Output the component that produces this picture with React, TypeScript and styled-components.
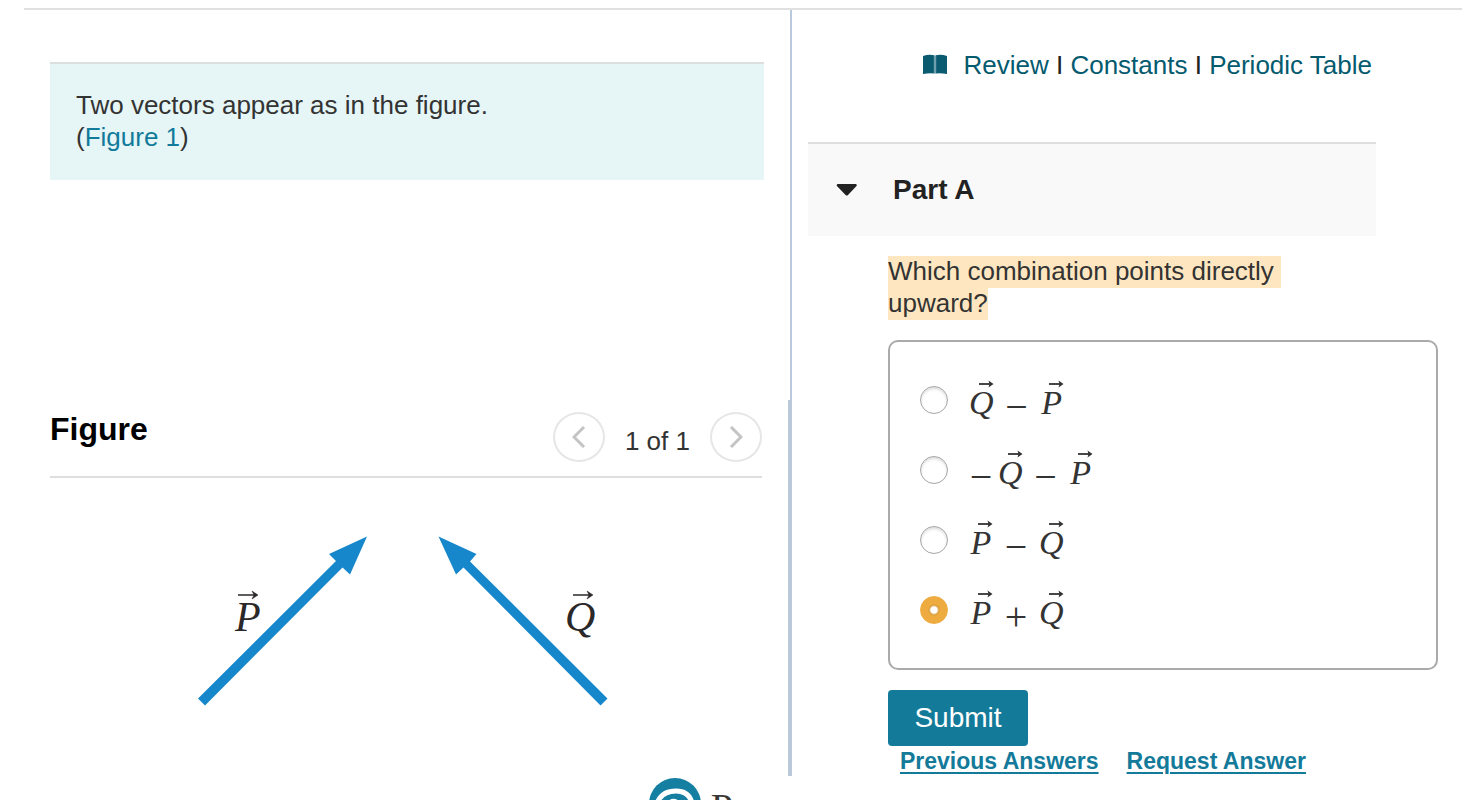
import React, { useState } from "react";
import styled, { createGlobalStyle } from "styled-components";

const GlobalStyle = createGlobalStyle`
  *, *::before, *::after { box-sizing: border-box; }
  body {
    margin: 0;
    background: #fff;
    color: #333;
    font-family: "Liberation Sans", Arial, Helvetica, sans-serif;
    font-size: 26px;
    line-height: 32px;
  }
`;

const Page = styled.div`
  height: 100vh;
  overflow: hidden;
  padding: 8px 0 0 24px;
`;

const Columns = styled.main`
  display: grid;
  grid-template-columns: 768fr 670fr;
  border-top: 2px solid #e0e0e0;
`;

const LeftPane = styled.div`
  display: flex;
  flex-direction: column;
  min-width: 0;
`;

const PromptSection = styled.section`
  min-height: 390px;
  padding: 52px 26px 0;
  border-right: 2px solid #b9c9de;
`;

const Prompt = styled.p`
  margin: 0;
  padding: 25px 26px 27px;
  border-top: 2px solid #dcdfdf;
  background: #e6f6f6;
`;

const TextLink = styled.a`
  color: #127a9b;
  text-decoration: none;
`;

const FigureSection = styled.section`
  flex: 1;
  min-height: 376px;
  padding: 0 26px;
  border-right: 4px solid #bac9da;
`;

const FigureHeader = styled.header`
  display: flex;
  justify-content: space-between;
  align-items: flex-start;
  height: 78px;
  padding-top: 12px;
  border-bottom: 2px solid #dedede;
`;

const FigureTitle = styled.h2`
  margin: 0;
  color: #000;
  font-size: 32px;
  line-height: 34px;
`;

const Pager = styled.nav`
  display: flex;
  align-items: center;
  gap: 20px;
`;

const PagerText = styled.span`
  padding-top: 8px;
`;

const PagerButton = styled.button`
  display: flex;
  align-items: center;
  justify-content: center;
  width: 52px;
  height: 50px;
  padding: 0;
  border: 2px solid #e6e6e6;
  border-radius: 50%;
  background: #fff;
  color: #c4c4c4;
`;

const FigureArt = styled.figure`
  display: flex;
  justify-content: center;
  margin: 0;
  padding-top: 52px;
`;

const RightPane = styled.div`
  min-width: 0;
  padding: 39px 0 0 16px;
`;

const Resources = styled.nav`
  display: flex;
  align-items: center;
  justify-content: flex-end;
  gap: 16px;
  margin-right: 90px;
  color: #222;

  a {
    color: #045a6e;
    text-decoration: none;
  }
`;

const PartHeader = styled.header`
  display: flex;
  align-items: center;
  gap: 35px;
  height: 94px;
  margin: 61px 86px 0 0;
  padding-left: 28px;
  border-top: 2px solid #dedede;
  background: #f9f9f9;
  color: #222;
`;

const Toggle = styled.button`
  display: flex;
  padding: 0;
  border: 0;
  background: none;
  color: inherit;
`;

const PartTitle = styled.h2`
  margin: 0;
  font-size: 28px;
  line-height: 32px;
`;

const PartBody = styled.form`
  padding: 19px 24px 0 80px;
`;

const Question = styled.p`
  margin: 0 0 21px;
`;

const Highlight = styled.mark`
  padding: 0 0 2px;
  background: #fee7c0;
  color: inherit;
`;

const Answers = styled.fieldset`
  margin: 0 0 20px;
  padding: 23px 30px;
  border: 2px solid #aaa;
  border-radius: 10px;
`;

const Answer = styled.label`
  display: flex;
  align-items: center;
  gap: 21px;
  height: 70px;
`;

const Radio = styled.input`
  appearance: none;
  flex: none;
  width: 28px;
  height: 28px;
  margin: 0;
  border: 1px solid #a6a6a6;
  border-radius: 50%;
  background: #fff;
  box-shadow: inset 0 2px 3px #ddd;

  &:checked {
    border-color: #eeab40;
    background: radial-gradient(circle, #fff 0 3px, #d99a35 5px, #eeab40 6px);
    box-shadow: none;
  }
`;

const Expression = styled.span`
  display: flex;
  align-items: center;
  padding-top: 6px;
  font-family: "Liberation Serif", "Times New Roman", serif;
  font-size: 34px;
  line-height: 40px;
`;

const Symbol = styled.i`
  position: relative;
  min-width: 24px;
  text-align: center;
`;

const OverArrow = styled.svg`
  position: absolute;
  top: -3px;
  right: 0;
`;

const Operator = styled.span<{ $unary?: boolean }>`
  width: 24px;
  padding-top: 8px;
  margin: ${(p) => (p.$unary ? "0 5px 0 0" : "0 11px")};
  font-size: 40px;
  text-align: center;
`;

const Submit = styled.button`
  display: block;
  width: 140px;
  height: 56px;
  padding: 0;
  border: 0;
  border-radius: 4px;
  background: #147a9a;
  color: #fff;
  font: inherit;
  font-size: 28px;
`;

const AnswerLinks = styled.div`
  display: flex;
  gap: 28px;
  padding-left: 12px;
  line-height: 30px;

  a {
    color: #147a9a;
    font-size: 23px;
    font-weight: bold;
    text-decoration-thickness: 2px;
    text-underline-offset: 3px;
  }
`;

const Footer = styled.footer`
  display: flex;
  align-items: flex-start;
  justify-content: center;
  gap: 10px;
  padding-top: 2px;
  color: #3a3835;
  font-family: "Liberation Serif", serif;
  font-size: 40px;
  line-height: 60px;
`;

type Term = "P" | "Q" | "+" | "−";

const choices: Term[][] = [
  ["Q", "−", "P"],
  ["−", "Q", "−", "P"],
  ["P", "−", "Q"],
  ["P", "+", "Q"],
];

function Formula({ terms }: { terms: Term[] }) {
  return (
    <Expression>
      {terms.map((term, i) =>
        term === "P" || term === "Q" ? (
          <Symbol key={i}>
            {term}
            <OverArrow width="16" height="8" viewBox="0 0 16 8" aria-hidden="true">
              <path d="M1 4h12" stroke="#333" strokeWidth="1.8" />
              <path d="M10.500 .4 15.500 4l-5 3.600 1-3.600Z" fill="#333" />
            </OverArrow>
          </Symbol>
        ) : (
          <Operator key={i} $unary={i === 0}>{term}</Operator>
        )
      )}
    </Expression>
  );
}

function VectorFigure() {
  return (
    <svg width="416" height="180" viewBox="198 530 416 180" role="img" aria-label="Vectors P and Q">
      <g fill="#1787cb">
        <path d="M198 698.500 336 561 329 554 367 536.500 350 574.500 342.500 567.500 205 705.500Z" />
        <path d="M607.500 698.500 470 561.500 476.500 554 438.500 536.500 456 574.500 463.500 567.500 600.500 705.500Z" />
      </g>
      <g fill="#2b2829" fontFamily="Liberation Serif" fontStyle="italic" fontSize="42">
        <text x="235" y="631">P</text>
        <text x="565" y="631">Q</text>
      </g>
      <g fill="#2b2829" stroke="#2b2829" strokeWidth="1.500">
        <path d="M238 595h17M573 595h17" />
        <path d="m252 591 6 4-6 4 2-4Zm335 0 6 4-6 4 2-4Z" strokeWidth=".5" />
      </g>
    </svg>
  );
}

export default function App() {
  const [selected, setSelected] = useState(3);

  return (
    <>
      <GlobalStyle />
      <Page>
        <Columns>
          <LeftPane>
            <PromptSection>
              <Prompt>
                Two vectors appear as in the figure.
                <br />(<TextLink href="#figure">Figure 1</TextLink>)
              </Prompt>
            </PromptSection>
            <FigureSection id="figure">
              <FigureHeader>
                <FigureTitle>Figure</FigureTitle>
                <Pager aria-label="Figures">
                  <PagerButton type="button" aria-label="Previous figure">
                    <svg width="14" height="22" viewBox="0 0 14 22" fill="none" stroke="currentColor" strokeWidth="3">
                      <path d="M12 1 2 11l10 10" />
                    </svg>
                  </PagerButton>
                  <PagerText>1 of 1</PagerText>
                  <PagerButton type="button" aria-label="Next figure">
                    <svg width="14" height="22" viewBox="0 0 14 22" fill="none" stroke="currentColor" strokeWidth="3">
                      <path d="m2 1 10 10L2 21" />
                    </svg>
                  </PagerButton>
                </Pager>
              </FigureHeader>
              <FigureArt>
                <VectorFigure />
              </FigureArt>
            </FigureSection>
          </LeftPane>

          <RightPane>
            <Resources aria-label="Resources">
              <svg width="24" height="22" viewBox="0 0 24 22" aria-hidden="true">
                <path d="M0 2Q6-.2 11.200 1.200V19.500Q6 19 0 20ZM12.800 1.200Q18-.2 24 2V20Q18 19 12.800 19.500Z" fill="#0a5a70" />
                <path d="M12 1.500v18" stroke="#6f9fac" strokeWidth="2.400" />
              </svg>
              <span>
                <a href="#review">Review</a> I <a href="#constants">Constants</a> I{" "}
                <a href="#periodic-table">Periodic Table</a>
              </span>
            </Resources>

            <PartHeader>
              <Toggle type="button" aria-label="Collapse Part A">
                <svg width="22" height="12" viewBox="0 0 22 12">
                  <path d="M1.500 0h18.500q1.500.8.500 2l-8.500 9q-1.200 1-2.400 0L.9 2Q0 .8 1.500 0Z" fill="currentColor" />
                </svg>
              </Toggle>
              <PartTitle>Part A</PartTitle>
            </PartHeader>

            <PartBody onSubmit={(e) => e.preventDefault()}>
              <Question>
                <Highlight>
                  Which combination points directly&nbsp;
                  <br />
                  upward?
                </Highlight>
              </Question>
              <Answers aria-label="Which combination points directly upward?">
                {choices.map((terms, i) => (
                  <Answer key={i}>
                    <Radio type="radio" name="answer" checked={selected === i} onChange={() => setSelected(i)} />
                    <Formula terms={terms} />
                  </Answer>
                ))}
              </Answers>
              <Submit type="submit">Submit</Submit>
              <AnswerLinks>
                <a href="#previous">Previous Answers</a>
                <a href="#request">Request Answer</a>
              </AnswerLinks>
            </PartBody>
          </RightPane>
        </Columns>

        <Footer>
          <svg width="52" height="52" viewBox="0 0 52 52" aria-hidden="true">
            <circle cx="26" cy="26" r="26" fill="#147fa1" />
            <path d="M9 23Q14 13 27 13 40 13 43 25" fill="none" stroke="#fff" strokeWidth="5" />
            <path d="M20 25q4-4 8-1 3 4-1 8l-3 3v3" fill="none" stroke="#fff" strokeWidth="4" />
            <circle cx="24" cy="44" r="2.500" fill="#fff" />
          </svg>
          <span>Pearson</span>
        </Footer>
      </Page>
    </>
  );
}
